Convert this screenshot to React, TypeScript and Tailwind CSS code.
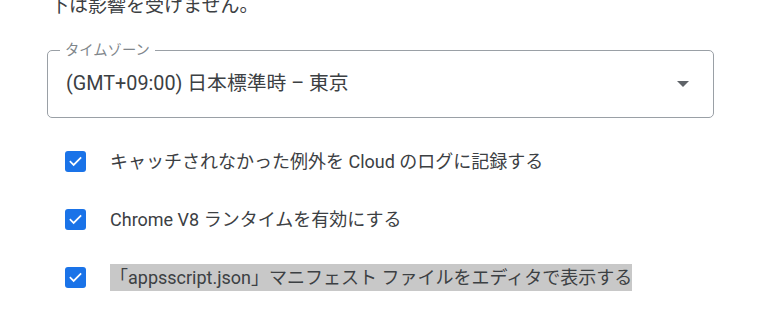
import React from "react";

const font = { fontFamily: 'Roboto, "Noto Sans CJK JP", sans-serif' };

function Check() {
  return (
    <div className="w-[21px] h-[21px] rounded-[3px] bg-[#1a73e8] flex items-center justify-center shrink-0">
      <svg width="15" height="15" viewBox="0 0 24 24" fill="none">
        <path d="M4 12.5l5 5L20 6.5" stroke="white" strokeWidth="2.8" strokeLinecap="square" />
      </svg>
    </div>
  );
}

function Row({ label, highlight }: { label: string; highlight?: boolean }) {
  return (
    <div className="flex items-center h-[24px]">
      <div className="ml-[65px]">
        <Check />
      </div>
      <span
        className={`ml-[24px] text-[18px] leading-[27px] text-[#3c4043] whitespace-nowrap ${highlight ? "bg-[#c8c8c8]" : ""}`}
      >
        {label}
      </span>
    </div>
  );
}

export default function App() {
  return (
    <div className="w-[768px] h-[324px] bg-white overflow-hidden" style={font}>
      <div className="pl-[50px] -mt-[6px] text-[19px] leading-[24px] text-[#3c4043]">下は影響を受けません。</div>
      <div className="relative ml-[47px] mt-[32px] w-[667px] h-[68px] border border-[#9aa0a6] rounded-[5px] flex items-center">
        <span className="absolute -top-[11px] left-[12px] px-[5px] bg-white text-[14.3px] leading-[20px] text-[#80868b]">
          タイムゾーン
        </span>
        <span className="ml-[18px] text-[19.8px] text-[#3c4043] whitespace-nowrap">(GMT+09:00) 日本標準時 – 東京</span>
        <svg className="ml-auto mr-[24px]" width="12" height="6" viewBox="0 0 10 5">
          <path d="M0 0h10L5 5z" fill="#5f6368" />
        </svg>
      </div>
      <div className="mt-[31px] flex flex-col gap-[34px]">
        <Row label="キャッチされなかった例外を Cloud のログに記録する" />
        <Row label="Chrome V8 ランタイムを有効にする" />
        <Row label="「appsscript.json」マニフェスト ファイルをエディタで表示する" highlight />
      </div>
    </div>
  );
}
